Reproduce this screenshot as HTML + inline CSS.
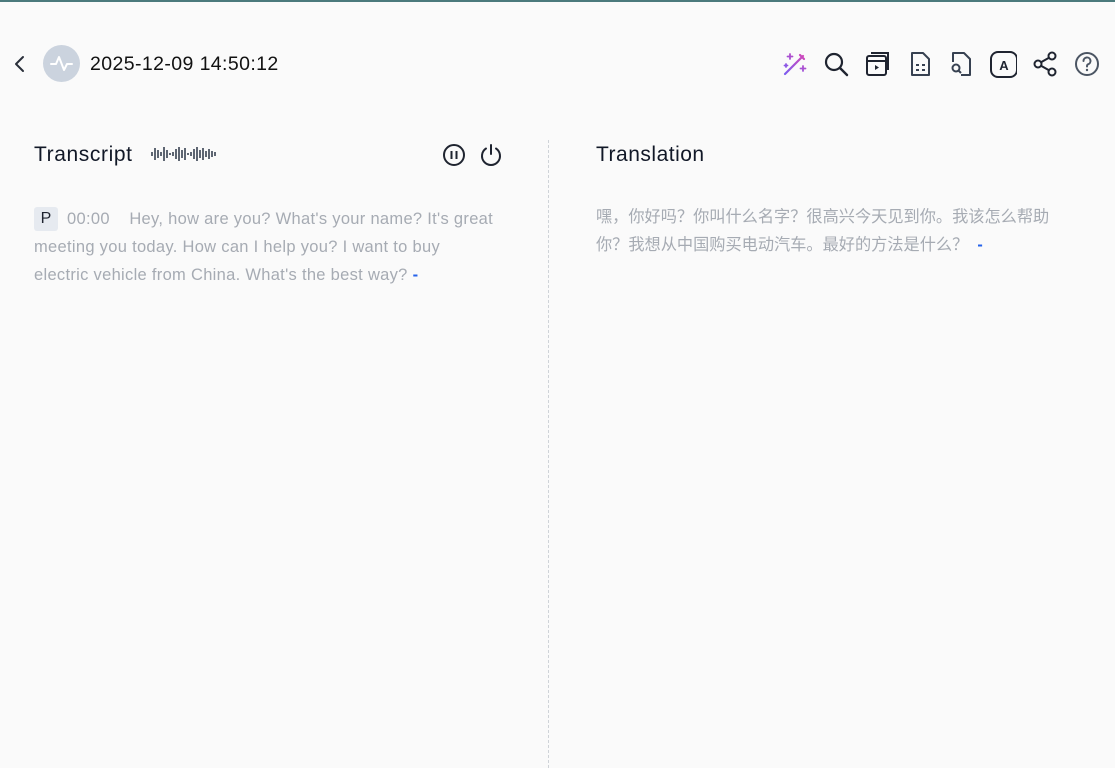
<!DOCTYPE html>
<html><head><meta charset="utf-8"><style>
*{margin:0;padding:0;box-sizing:border-box}
body{width:1115px;height:768px;background:#fafafa;font-family:"Liberation Sans","Noto Sans CJK SC",sans-serif;position:relative;overflow:hidden;color:#1f2430}
.top{position:absolute;top:0;left:0;width:1115px;height:2px;background:#4b7a7c}
.abs{position:absolute}
.ic{position:absolute;top:50px;width:28px;height:28px}
.gray{color:#a6abb3}
</style></head><body>
<div class="top"></div>
<svg class="abs" style="left:12px;top:54px" width="16" height="20" viewBox="0 0 16 20"><path d="M11 3 L4 10 L11 17" fill="none" stroke="#2a2f3a" stroke-width="2" stroke-linecap="round" stroke-linejoin="round"/></svg>
<div class="abs" style="left:43px;top:45px;width:37px;height:37px;border-radius:50%;background:#cbd3de"></div>
<svg class="abs" style="left:43px;top:45px" width="37" height="37" viewBox="0 0 37 37"><path d="M8 19 H13 L16 12 L21 25 L24 19 H29" fill="none" stroke="#fff" stroke-width="2" stroke-linejoin="round" stroke-linecap="round"/></svg>
<div class="abs" style="left:90px;top:53px;font-size:19.5px;letter-spacing:0.4px;color:#111">2025-12-09 14:50:12</div>

<svg class="ic" style="left:781px" viewBox="0 0 28 28"><defs><linearGradient id="g" x1="0" y1="1" x2="1" y2="0"><stop offset="0" stop-color="#7b5cf0"/><stop offset="1" stop-color="#d246b8"/></linearGradient></defs><path d="M4 24 L22 6 M19 5 l4 4" stroke="url(#g)" stroke-width="2.2" fill="none" stroke-linecap="round"/><path d="M9 4v5M6.5 6.5h5M22 16v5M19.5 18.5h5M5 14v3M3.5 15.5h3" stroke="url(#g)" stroke-width="1.8" stroke-linecap="round"/></svg>
<svg class="ic" style="left:822px" viewBox="0 0 28 28"><circle cx="12" cy="12" r="8" fill="none" stroke="#1f2430" stroke-width="2.2"/><path d="M18 18 L25 25" stroke="#1f2430" stroke-width="2.4" stroke-linecap="round"/></svg>
<svg class="ic" style="left:864px" viewBox="0 0 28 28"><rect x="3" y="6" width="19" height="19" rx="2" fill="none" stroke="#1f2430" stroke-width="2"/><path d="M3 11h19M7 3h17v17" fill="none" stroke="#1f2430" stroke-width="2"/><path d="M11 15 l4 2.5 l-4 2.5z" fill="#1f2430"/></svg>
<svg class="ic" style="left:906px" viewBox="0 0 28 28"><path d="M6 3h11l6 6v16H6z" fill="none" stroke="#374151" stroke-width="2" stroke-linejoin="round"/><path d="M10 15h3M16 15h3M10 20h3M16 20h3" stroke="#374151" stroke-width="2"/></svg>
<svg class="ic" style="left:947px" viewBox="0 0 28 28"><path d="M6 12V3h11l6 6v16H14" fill="none" stroke="#374151" stroke-width="2" stroke-linejoin="round"/><circle cx="9" cy="18" r="3.5" fill="none" stroke="#374151" stroke-width="2"/><path d="M11.5 20.5l2.5 2.5" stroke="#374151" stroke-width="2"/></svg>
<svg class="ic" style="left:989px" viewBox="0 0 28 28"><rect x="2" y="2" width="26" height="25" rx="7" fill="none" stroke="#1f2430" stroke-width="2"/><text x="15" y="20" text-anchor="middle" font-family="Liberation Sans" font-weight="bold" font-size="13" fill="#1f2430">A</text></svg>
<svg class="ic" style="left:1031px" viewBox="0 0 28 28"><circle cx="21" cy="6" r="3.5" fill="none" stroke="#1f2430" stroke-width="2"/><circle cx="7" cy="14" r="3.5" fill="none" stroke="#1f2430" stroke-width="2"/><circle cx="21" cy="22" r="3.5" fill="none" stroke="#1f2430" stroke-width="2"/><path d="M10 12.3l8-4.6M10 15.7l8 4.6" stroke="#1f2430" stroke-width="2"/></svg>
<svg class="ic" style="left:1073px" viewBox="0 0 28 28"><circle cx="14" cy="14" r="11" fill="none" stroke="#4b5563" stroke-width="2"/><path d="M10.5 11a3.5 3.5 0 1 1 4.5 3.3c-1 .4-1 1-1 2.2" fill="none" stroke="#4b5563" stroke-width="2" stroke-linecap="round"/><circle cx="14" cy="20" r="1.2" fill="#4b5563"/></svg>

<div class="abs" style="left:34px;top:143px;font-size:21px;letter-spacing:0.6px;color:#111827">Transcript</div>
<svg class="abs" style="left:150px;top:145px" width="68" height="18" viewBox="0 0 68 18"><g stroke="#374151" stroke-width="1.6"><path d="M2 7v4M5 3v12M8 5v8M11 7v4M14 2v14M17 5v8M20 8v2M23 7v4M26 4v10M29 2v14M32 5v8M35 3v12M38 8v2M41 7v4M44 4v10M47 2v14M50 5v8M53 3v12M56 6v6M59 4v10M62 6v6M65 7v4"/></g></svg>
<svg class="abs" style="left:441px;top:142px" width="26" height="26" viewBox="0 0 26 26"><circle cx="13" cy="13" r="10" fill="none" stroke="#1f2430" stroke-width="2"/><path d="M10.5 9v8M15.5 9v8" stroke="#1f2430" stroke-width="2"/></svg>
<svg class="abs" style="left:478px;top:142px" width="26" height="26" viewBox="0 0 26 26"><path d="M8 6.5a9 9 0 1 0 10 0" fill="none" stroke="#1f2430" stroke-width="2" stroke-linecap="round"/><path d="M13 3v9" stroke="#1f2430" stroke-width="2" stroke-linecap="round"/></svg>

<div class="abs" style="left:34px;top:207px;width:24px;height:24px;background:#e6eaf0;border-radius:3px;font-size:16px;text-align:center;line-height:24px;color:#1f2430">P</div>
<div class="abs gray" style="left:34px;top:205px;width:463px;font-size:16.5px;letter-spacing:0.3px;line-height:28px;text-indent:33px"><span>00:00</span>&nbsp;&nbsp;&nbsp; Hey, how are you? What's your name? It's great meeting you today. How can I help you? I want to buy electric vehicle from China. What's the best way? <span style="color:#2563eb;font-weight:bold">-</span></div>

<div class="abs" style="left:548px;top:140px;height:628px;border-left:1px dashed #cfd3d8"></div>

<div class="abs" style="left:596px;top:143px;font-size:21px;letter-spacing:0.5px;color:#111827">Translation</div>
<div class="abs gray" style="left:596px;top:203px;width:462px;font-size:16.2px;line-height:28px">嘿，你好吗？你叫什么名字？很高兴今天见到你。我该怎么帮助你？我想从中国购买电动汽车。最好的方法是什么？ &nbsp;<span style="color:#2563eb;font-weight:bold">-</span></div>
</body></html>
